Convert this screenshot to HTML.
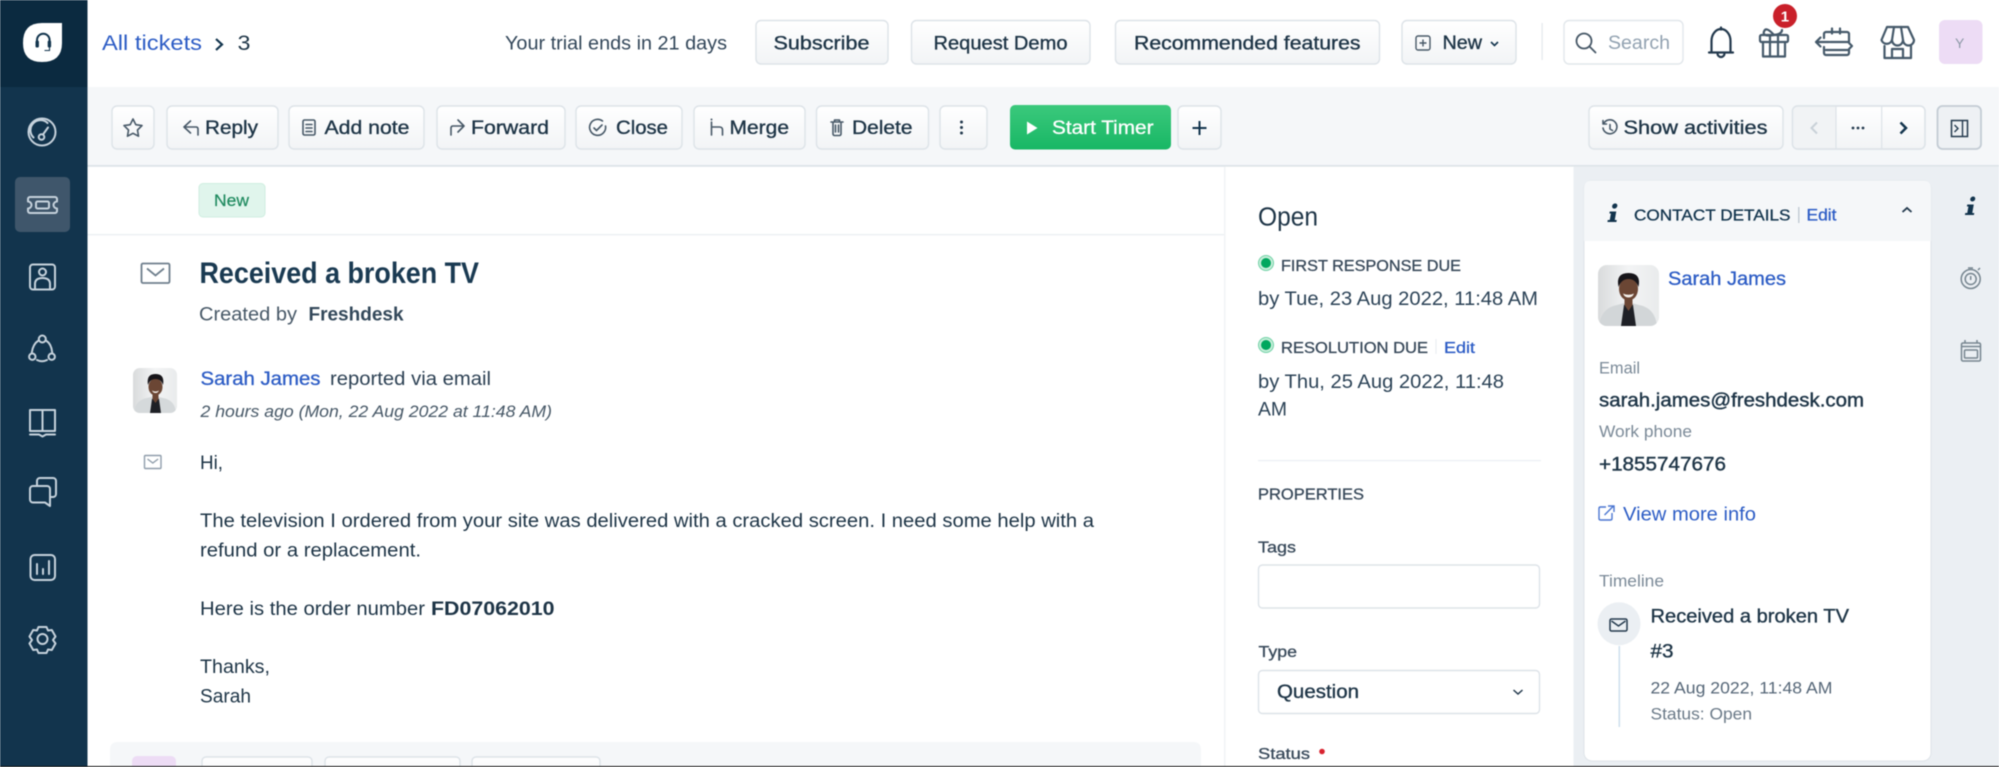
<!DOCTYPE html>
<html lang="en">
<head>
<meta charset="utf-8">
<title>Received a broken TV</title>
<style>
html,body{margin:0;padding:0;width:1999px;height:767px;overflow:hidden;background:#fff}
svg{display:block;filter:blur(.5px)}
text{font-family:"Liberation Sans",sans-serif;fill:#1d3446;font-size:19px}
.m{stroke:#1d3446;stroke-width:.35px}
.b{fill:#2c5cc5}
.bm{fill:#2c5cc5;stroke:#2c5cc5;stroke-width:.3px}
.g{fill:#475867}
.l{fill:#7b8a98;font-size:16.800px}
.u{font-size:16px;fill:#38495a;stroke:#38495a;stroke-width:.3px}
.ic{fill:none;stroke:#c6d2dc;stroke-width:2;stroke-linecap:round;stroke-linejoin:round}
.tb{fill:none;stroke:#475867;stroke-width:1.600;stroke-linecap:round;stroke-linejoin:round}
.hd{fill:none;stroke:#45596a;stroke-width:2.200;stroke-linecap:round;stroke-linejoin:round}
.btn{fill:url(#bg);stroke:#dde3e8;stroke-width:1.400}
</style>
</head>
<body>
<svg xmlns="http://www.w3.org/2000/svg" width="1999" height="767" viewBox="0 0 1999 767">
<defs>
<linearGradient id="bg" x1="0" y1="0" x2="0" y2="1"><stop offset="0" stop-color="#fff"/><stop offset="1" stop-color="#f2f4f6"/></linearGradient>
<linearGradient id="gr" x1="0" y1="0" x2="0" y2="1"><stop offset="0" stop-color="#3bc97c"/><stop offset="1" stop-color="#18b765"/></linearGradient>
<linearGradient id="ph" x1="0" y1="0" x2="1" y2="0"><stop offset="0" stop-color="#d9dbdc"/><stop offset=".5" stop-color="#f3f4f5"/><stop offset="1" stop-color="#e9ebec"/></linearGradient>
<clipPath id="c1"><rect x="133" y="368" width="44" height="45" rx="7"/></clipPath>
<clipPath id="c2"><rect x="1598" y="265" width="61" height="61" rx="9"/></clipPath>
</defs>

<rect width="1999" height="767" fill="#fff"/>

<!-- sidebar -->
<rect x="0" y="0" width="87.500" height="767" fill="#12344d"/>
<rect x="0" y="0" width="87.500" height="87" fill="#0b2a40"/>
<path d="M62 23V43Q62 62 42 62Q23 62 23 43Q23 23 42 23Z" fill="#fff"/>
<path d="M37 46V40a6.300 6.300 0 0 1 12.600 0V46" fill="none" stroke="#12344d" stroke-width="2"/>
<rect x="35.500" y="40.500" width="3.400" height="7" rx="1.400" fill="#12344d"/>
<rect x="47.700" y="40.500" width="3.400" height="7" rx="1.400" fill="#12344d"/>
<path d="M49.500 47.500v3h-5" fill="none" stroke="#12344d" stroke-width="1.100"/>

<!-- gauge -->
<g class="ic"><circle cx="42" cy="132" r="13.500"/><path d="M33.500 137.500a10 10 0 0 1 14-14.500"/><circle cx="41.500" cy="137" r="2.800"/><path d="M43 134.500l5-7"/></g>
<!-- ticket -->
<rect x="15" y="177" width="55" height="55" rx="5" fill="#3f566b"/>
<path class="ic" d="M30 197H55a2 2 0 0 1 2 2v2.500a3.500 3.500 0 0 0 0 7V211a2 2 0 0 1-2 2H30a2 2 0 0 1-2-2v-2.500a3.500 3.500 0 0 0 0-7V199a2 2 0 0 1 2-2Z"/>
<rect x="36" y="201.500" width="13" height="7" rx="1.500" class="ic"/>
<!-- contact -->
<g class="ic"><rect x="30" y="264.500" width="25" height="25" rx="3"/><circle cx="42.500" cy="272" r="3.500"/><path d="M35 289.500V284q0-6 7.500-6t7.500 6v5.500"/></g>
<!-- network -->
<g class="ic"><circle cx="42.300" cy="339" r="3.500"/><circle cx="32.300" cy="356.700" r="3.200"/><circle cx="51.700" cy="356.700" r="3.200"/><path d="M38.500 340.500Q33 344 31.800 352.500M46 340.500Q51.500 344 52.200 352.500M37 360q5 2.500 10 0"/></g>
<!-- book -->
<g class="ic"><path d="M42.500 412v19M30 410H42.500V431H30ZM42.500 410H55V431H42.500Z"/><path d="M30 434.500H39l3.500 2 3.500-2H55"/></g>
<!-- chat -->
<g class="ic"><path d="M37 485v-4a3 3 0 0 1 3-3h13a3 3 0 0 1 3 3v13a3 3 0 0 1-3 3h-2"/><path d="M33 486H47a3 3 0 0 1 3 3V506l-5-3.500H33a3 3 0 0 1-3-3V489a3 3 0 0 1 3-3Z"/></g>
<!-- report -->
<g class="ic"><rect x="30.500" y="555" width="24.500" height="25" rx="4"/><path d="M37 564v10M43 569v5M49 561v13"/></g>
<!-- gear -->
<g class="ic"><circle cx="42.500" cy="639" r="5"/><path d="M38.500 627h8l1.500 3.500 3.800-.5 3.700 6.500L53 640l2.500 3.500-3.700 6.500-3.800-.5L46.500 653h-8L37 649.500l-3.800.5-3.700-6.500L32 640l-2.500-3.500 3.700-6.500 3.800.5Z"/></g>

<!-- top bar -->
<text class="b" x="102" y="50" style="font-size:21.500px" textLength="100" lengthAdjust="spacingAndGlyphs">All tickets</text>
<path d="M216 39l6 5.500-6 5.500" fill="none" stroke="#12344d" stroke-width="2.200"/>
<text x="237.500" y="50" style="font-size:21.500px" textLength="13" lengthAdjust="spacingAndGlyphs">3</text>
<text style="fill:#33475a" x="505" y="49.500" textLength="222" lengthAdjust="spacingAndGlyphs">Your trial ends in 21 days</text>

<rect class="btn" x="756" y="20.500" width="132" height="43.500" rx="5"/>
<text class="m" x="773.500" y="49.500" textLength="96" lengthAdjust="spacingAndGlyphs">Subscribe</text>
<rect class="btn" x="911.500" y="20.500" width="178.500" height="43.500" rx="5"/>
<text class="m" x="933.500" y="49.500" textLength="134" lengthAdjust="spacingAndGlyphs">Request Demo</text>
<rect class="btn" x="1115.500" y="20.500" width="264" height="43.500" rx="5"/>
<text class="m" x="1134" y="49.500" textLength="226.500" lengthAdjust="spacingAndGlyphs">Recommended features</text>

<rect class="btn" x="1402" y="20.500" width="114" height="43.500" rx="5"/>
<rect x="1416" y="36" width="14" height="14" rx="2" fill="none" stroke="#475867" stroke-width="1.400"/>
<path d="M1423 39.500v7M1419.500 43h7" stroke="#475867" stroke-width="1.400"/>
<text class="m" x="1442.500" y="49" textLength="39.500" lengthAdjust="spacingAndGlyphs">New</text>
<path d="M1491 42l3.500 3.500 3.500-3.500" fill="none" stroke="#12344d" stroke-width="1.600"/>

<rect x="1541.500" y="23" width="1.200" height="37" fill="#e4e8ec"/>
<rect x="1564" y="20.500" width="119" height="43.500" rx="5" fill="#fff" stroke="#e2e7eb" stroke-width="1.400"/>
<circle cx="1584" cy="41" r="7.500" fill="none" stroke="#475867" stroke-width="1.800"/>
<path d="M1589.500 46.500l6 6" stroke="#475867" stroke-width="1.800" stroke-linecap="round"/>
<text x="1608" y="49" style="fill:#92a2b1" textLength="62" lengthAdjust="spacingAndGlyphs">Search</text>

<!-- bell -->
<g fill="none" stroke="#23394d" stroke-width="2.200" stroke-linecap="round" stroke-linejoin="round"><path d="M1709 52.500h24M1711.500 52V41a9.500 12 0 0 1 19 0V52"/><path d="M1721 27.500v2M1717.500 53.500a3.500 3.500 0 0 0 7 0"/></g>
<!-- gift -->
<g class="hd"><rect x="1760" y="35" width="28" height="7" rx="1.500"/><path d="M1763 42V56.500H1785V42M1770 42V56.500M1778 42V56.500M1770 35v7M1778 35v7"/><path d="M1774 35q-8-9-10-3.500t10 3.500q8-1 8-5"/></g>
<circle cx="1785" cy="16" r="12" fill="#c9202a"/>
<text x="1780.800" y="21.500" style="fill:#fff;font-size:15px;font-weight:bold">1</text>
<!-- calendar arrow -->
<g class="hd"><path d="M1824 38V34a2 2 0 0 1 2-2H1847a2 2 0 0 1 2 2V42M1824 47V53a2 2 0 0 0 2 2H1847a2 2 0 0 0 2-2V50M1830 42H1849M1826 50H1849M1832 28.500v5M1840 28.500v5"/><path d="M1816 42H1829M1820.500 37.500L1816 42l4.500 4.500"/><path d="M1849 43l3 3-3 3"/></g>
<!-- store -->
<g class="hd"><path d="M1881.500 40L1887 27H1908L1914 40a5.500 5.500 0 0 1-11 0a5.500 5.500 0 0 1-11 0a5.500 5.500 0 0 1-10.500 0Z"/><path d="M1892 40l2-13M1903 40l-2-13M1884.500 46V58H1911V46M1892 58V49H1903V58"/></g>
<rect x="1939" y="20" width="43.500" height="44" rx="6" fill="#eddcf5"/>
<text x="1955" y="48" style="font-size:14px;fill:#8f9aa8">Y</text>

<!-- toolbar -->
<rect x="87.500" y="87" width="1911.500" height="79" fill="#f5f7f9"/>
<rect x="87.500" y="165" width="1911.500" height="1.800" fill="#dde3e8"/>

<rect class="btn" x="112" y="106" width="42" height="43" rx="5"/>
<path class="tb" d="M133 119l2.800 5.700 6.200.9-4.500 4.400 1 6.200-5.500-2.900-5.500 2.900 1-6.200-4.500-4.400 6.200-.9Z"/>

<rect class="btn" x="167" y="106" width="111" height="43" rx="5"/>
<path class="tb" d="M190.500 121l-6.500 6 6.500 6M184 127h12q2 0 2 2v6"/>
<text class="m" x="205" y="134" textLength="53" lengthAdjust="spacingAndGlyphs">Reply</text>

<rect class="btn" x="289" y="106" width="135" height="43" rx="5"/>
<rect x="303" y="120" width="12" height="15" rx="1.500" class="tb"/><path class="tb" d="M306 124.500h6M306 128h6M306 131.500h6"/>
<text class="m" x="324.500" y="134" textLength="85" lengthAdjust="spacingAndGlyphs">Add note</text>

<rect class="btn" x="437" y="106" width="128" height="43" rx="5"/>
<path class="tb" d="M458 120l6 6-6 6M464 126h-11q-2 0-2 2v7"/>
<text class="m" x="471" y="134" textLength="78" lengthAdjust="spacingAndGlyphs">Forward</text>

<rect class="btn" x="576" y="106" width="106" height="43" rx="5"/>
<path class="tb" d="M605.500 126a8 8 0 1 1-3-5"/><path class="tb" d="M594 128l2.500 2.500 5.500-5.500"/>
<text class="m" x="616" y="134" textLength="52" lengthAdjust="spacingAndGlyphs">Close</text>

<rect class="btn" x="694" y="106" width="111" height="43" rx="5"/>
<path class="tb" d="M711.500 122v13M711.500 127h8q3 0 3 3v5"/><circle cx="711.500" cy="119.500" r="1" fill="#475867"/>
<text class="m" x="729.500" y="134" textLength="59.500" lengthAdjust="spacingAndGlyphs">Merge</text>

<rect class="btn" x="816.500" y="106" width="112" height="43" rx="5"/>
<path class="tb" d="M831 122h12M833 122v12a1.500 1.500 0 0 0 1.500 1.500h5a1.500 1.500 0 0 0 1.500-1.500v-12M834.500 122v-2h5v2M835.500 125v7M838.500 125v7"/>
<text class="m" x="852" y="134" textLength="60.500" lengthAdjust="spacingAndGlyphs">Delete</text>

<rect class="btn" x="940" y="106" width="47" height="43" rx="5"/>
<circle cx="961.500" cy="122" r="1.500" fill="#23394d"/><circle cx="961.500" cy="127.500" r="1.500" fill="#23394d"/><circle cx="961.500" cy="133" r="1.500" fill="#23394d"/>

<rect x="1010" y="105" width="161" height="44.500" rx="5" fill="url(#gr)"/>
<path d="M1027 121.500l10.500 6.500-10.500 6.500Z" fill="#fff"/>
<text x="1052" y="134" style="fill:#fff;stroke:#fff;stroke-width:.3px" textLength="101.500" lengthAdjust="spacingAndGlyphs">Start Timer</text>

<rect class="btn" x="1178" y="106" width="43" height="43" rx="5"/>
<path d="M1199.500 121v14M1192.500 128h14" stroke="#12344d" stroke-width="2"/>

<rect class="btn" x="1589" y="106" width="194" height="43" rx="5"/>
<path class="tb" d="M1604 123a7 7 0 1 1-1 5M1603 120.500v3.500h3.500M1610 124.500V129l2.500 1.500"/>
<text class="m" x="1623.500" y="134" textLength="144" lengthAdjust="spacingAndGlyphs">Show activities</text>

<rect x="1792.500" y="106" width="132.500" height="43" rx="5" fill="url(#bg)" stroke="#dde3e8" stroke-width="1.400"/>
<path d="M1793 106.700h43v41.600h-43Z" fill="#f1f3f5"/>
<rect x="1792.500" y="106" width="132.500" height="43" rx="5" fill="none" stroke="#dde3e8" stroke-width="1.400"/>
<path d="M1836 106v43M1881.700 106v43" stroke="#dde3e8" stroke-width="1.200"/>
<path d="M1817 122.500l-5.500 5.500 5.500 5.500" fill="none" stroke="#c9d1d8" stroke-width="2"/>
<circle cx="1853" cy="128" r="1.400" fill="#23394d"/><circle cx="1858" cy="128" r="1.400" fill="#23394d"/><circle cx="1863" cy="128" r="1.400" fill="#23394d"/>
<path d="M1900.500 122.500l5.500 5.500-5.500 5.500" fill="none" stroke="#12344d" stroke-width="2.500"/>

<rect x="1937.500" y="106" width="43.500" height="43" rx="5" fill="#eef1f4" stroke="#c3ccd4" stroke-width="1.800"/>
<rect x="1951.500" y="120.500" width="16" height="16" fill="none" stroke="#23394d" stroke-width="1.500"/>
<path d="M1962.500 120.500v16M1954.500 125l3.500 3.500-3.500 3.500" fill="none" stroke="#23394d" stroke-width="1.400"/>

<!-- main content -->
<rect x="199" y="183.500" width="66" height="33.500" rx="4" fill="#e0f5ec" stroke="#cfeee0" stroke-width="1"/>
<text x="214" y="206" style="fill:#1f8a5f;font-size:17px;stroke:#1f8a5f;stroke-width:.2px" textLength="35" lengthAdjust="spacingAndGlyphs">New</text>
<rect x="87.500" y="234" width="1137.500" height="1.300" fill="#ebeff3"/>

<rect x="141.500" y="263.500" width="28" height="19.500" rx="1.500" fill="none" stroke="#6f7f8d" stroke-width="1.800"/>
<path d="M147 268.500l8.500 7 8.500-7" fill="none" stroke="#6f7f8d" stroke-width="1.800"/>
<text x="199.500" y="283" style="font-size:30px;font-weight:bold;fill:#1a3a52" textLength="279.500" lengthAdjust="spacingAndGlyphs">Received a broken TV</text>
<text class="g" x="199" y="320.500" textLength="98" lengthAdjust="spacingAndGlyphs">Created by</text>
<text x="308.500" y="320.500" style="font-weight:bold;fill:#33485a" textLength="95" lengthAdjust="spacingAndGlyphs">Freshdesk</text>

<!-- small avatar -->
<g clip-path="url(#c1)">
<rect x="133" y="368" width="44" height="45" fill="url(#ph)"/>
<path d="M134 413q1-13 13-15l8-2 8 2q12 2 13 15Z" fill="#d5d9db"/>
<path d="M150 413l2-14 3.500-3 3.500 3 2 14Z" fill="#1e2026"/>
<path d="M152.500 399l3 4 3-4v-6h-6Z" fill="#6b4634"/>
<ellipse cx="155.500" cy="387" rx="7" ry="8.500" fill="#6b4634"/>
<path d="M148 385q-2-11 7.500-11t7.500 11q-2-6-7.500-6t-7.500 6Z" fill="#17151a"/>
<path d="M152 390.500q3.500 2 7 0q-1 2.500-3.500 2.500t-3.500-2.500Z" fill="#f4efe9"/>
</g>
<text class="bm" x="200.500" y="385" textLength="120" lengthAdjust="spacingAndGlyphs">Sarah James</text>
<text style="fill:#2d4154" x="330" y="385" textLength="161" lengthAdjust="spacingAndGlyphs">reported via email</text>
<text style="font-style:italic;font-size:17px;fill:#475867" x="200.500" y="417" textLength="351.500" lengthAdjust="spacingAndGlyphs">2 hours ago (Mon, 22 Aug 2022 at 11:48 AM)</text>

<rect x="144.500" y="455.500" width="16.500" height="13" rx="1" fill="none" stroke="#8f9dab" stroke-width="1.400"/>
<path d="M147.500 459l5.300 4 5.300-4" fill="none" stroke="#8f9dab" stroke-width="1.400"/>
<text x="200" y="469" textLength="23" lengthAdjust="spacingAndGlyphs">Hi,</text>
<text x="200" y="527" textLength="894" lengthAdjust="spacingAndGlyphs">The television I ordered from your site was delivered with a cracked screen. I need some help with a</text>
<text x="200" y="556.500" textLength="221" lengthAdjust="spacingAndGlyphs">refund or a replacement.</text>
<text x="200" y="615" textLength="225" lengthAdjust="spacingAndGlyphs">Here is the order number</text>
<text x="431" y="615" style="font-weight:bold" textLength="123.500" lengthAdjust="spacingAndGlyphs">FD07062010</text>
<text x="200" y="673" textLength="70" lengthAdjust="spacingAndGlyphs">Thanks,</text>
<text x="200" y="702.500" textLength="51" lengthAdjust="spacingAndGlyphs">Sarah</text>

<!-- reply bar -->
<path d="M110 767V750q0-8 8-8H1193q8 0 8 8V767Z" fill="#f5f7f9"/>
<path d="M132 767V762q0-6 6-6H170q6 0 6 6V767Z" fill="#eddcf5"/>
<rect x="202" y="757" width="110" height="20" rx="4" class="btn"/>
<rect x="325" y="757" width="135" height="20" rx="4" class="btn"/>
<rect x="472" y="757" width="128" height="20" rx="4" class="btn"/>

<!-- properties column -->
<rect x="1225" y="166.800" width="349" height="600" fill="#fff"/>
<rect x="1224" y="166.800" width="1.500" height="600" fill="#f1f3f5"/>
<text x="1258" y="225.500" style="font-size:25.500px" textLength="60" lengthAdjust="spacingAndGlyphs">Open</text>

<circle cx="1266" cy="263" r="7.500" fill="#c7eeda" stroke="#6fd1a5" stroke-width="1"/><circle cx="1266" cy="263" r="5" fill="#00a75e"/>
<text class="u" x="1281" y="271" textLength="180" lengthAdjust="spacingAndGlyphs">FIRST RESPONSE DUE</text>
<text style="fill:#2b4256" x="1258" y="305" textLength="280" lengthAdjust="spacingAndGlyphs">by Tue, 23 Aug 2022, 11:48 AM</text>

<circle cx="1266" cy="345" r="7.500" fill="#c7eeda" stroke="#6fd1a5" stroke-width="1"/><circle cx="1266" cy="345" r="5" fill="#00a75e"/>
<text class="u" x="1281" y="353" textLength="147" lengthAdjust="spacingAndGlyphs">RESOLUTION DUE</text>
<rect x="1435.500" y="339" width="1" height="15" fill="#e8ecef"/>
<text class="bm" x="1444" y="353" style="font-size:16px" textLength="31" lengthAdjust="spacingAndGlyphs">Edit</text>
<text style="fill:#2b4256" x="1258" y="388" textLength="246" lengthAdjust="spacingAndGlyphs">by Thu, 25 Aug 2022, 11:48</text>
<text style="fill:#2b4256" x="1258" y="415.500" textLength="29" lengthAdjust="spacingAndGlyphs">AM</text>

<rect x="1258" y="460" width="283" height="1.200" fill="#ebeff3"/>
<text class="u" x="1258" y="499.500" textLength="106" lengthAdjust="spacingAndGlyphs">PROPERTIES</text>
<text class="u" x="1258" y="552.500" textLength="38" lengthAdjust="spacingAndGlyphs">Tags</text>
<rect x="1258.500" y="565" width="281" height="43" rx="4" fill="#fff" stroke="#dde3e8" stroke-width="1.400"/>
<text class="u" x="1258.500" y="657" textLength="38.500" lengthAdjust="spacingAndGlyphs">Type</text>
<rect x="1258.500" y="670.500" width="281" height="43" rx="4" fill="#fff" stroke="#dde3e8" stroke-width="1.400"/>
<text class="m" x="1277" y="698" textLength="82" lengthAdjust="spacingAndGlyphs">Question</text>
<path d="M1513.500 690l4.500 4 4.500-4" fill="none" stroke="#23394d" stroke-width="1.500"/>
<text class="u" x="1258" y="759" textLength="52" lengthAdjust="spacingAndGlyphs">Status</text>
<circle cx="1322" cy="751.500" r="2.800" fill="#d8232f"/>

<!-- right column -->
<rect x="1573.500" y="166.800" width="425.500" height="600" fill="#ebeff3"/>
<rect x="1584" y="180.500" width="347" height="580.500" rx="8" fill="#fff" stroke="#dfe4e9" stroke-width="1"/>
<path d="M1584 241V188.500q0-8 8-8H1923q8 0 8 8V241Z" fill="#f5f7f9"/>
<g fill="#12344d" transform="translate(1613.500 213) skewX(-10) translate(-1613.500 -213)"><circle cx="1613.500" cy="206" r="2.600"/><path d="M1609.500 211.500h6.500V220h2v2h-9v-2h2v-6.500h-1.500Z"/></g>
<text class="u" style="fill:#12344d;stroke:#12344d" x="1634" y="220.500" textLength="156.500" lengthAdjust="spacingAndGlyphs">CONTACT DETAILS</text>
<rect x="1798.200" y="207" width="1.200" height="16" fill="#b9c4ce"/>
<text class="bm" x="1806.500" y="220.500" style="font-size:17px" textLength="30" lengthAdjust="spacingAndGlyphs">Edit</text>
<path d="M1902.500 212l4.500-4 4.500 4" fill="none" stroke="#23394d" stroke-width="1.800"/>

<g clip-path="url(#c2)">
<rect x="1598" y="265" width="61" height="61" fill="url(#ph)"/>
<path d="M1599 326q2-18 18-21l11-3 11 3q16 3 18 21Z" fill="#d2d6d8"/>
<path d="M1621 326l3-21 4.500-4 4.500 4 3 21Z" fill="#1e2026"/>
<path d="M1624.500 305l4 6 4-6v-8h-8Z" fill="#6b4634"/>
<ellipse cx="1628.500" cy="289" rx="9.500" ry="11.500" fill="#6b4634"/>
<path d="M1618.500 287q-3-14 10-14t10 14q-3-8-10-8t-10 8Z" fill="#17151a"/>
<path d="M1623 293.500q5.500 2.500 11 0q-1.500 4-5.500 4t-5.500-4Z" fill="#f4efe9"/>
</g>
<text class="bm" x="1668" y="285" textLength="118" lengthAdjust="spacingAndGlyphs">Sarah James</text>

<text class="l" x="1599" y="373.500" textLength="41" lengthAdjust="spacingAndGlyphs">Email</text>
<text class="m" style="stroke-width:.4px" x="1599" y="406.500" textLength="265" lengthAdjust="spacingAndGlyphs">sarah.james@freshdesk.com</text>
<text class="l" x="1599" y="437" textLength="93" lengthAdjust="spacingAndGlyphs">Work phone</text>
<text class="m" style="stroke-width:.4px" x="1599" y="470.500" textLength="127" lengthAdjust="spacingAndGlyphs">+1855747676</text>

<path d="M1606 507h-5.500q-1.500 0-1.500 1.500v10q0 1.500 1.500 1.500h10q1.500 0 1.500-1.500V513M1604.500 515l9-9M1608 506h6v6" fill="none" stroke="#4a75d1" stroke-width="1.400"/>
<text class="b" x="1623" y="520.500" textLength="133" lengthAdjust="spacingAndGlyphs">View more info</text>

<text class="l" x="1599" y="586.500" textLength="65" lengthAdjust="spacingAndGlyphs">Timeline</text>
<rect x="1618.500" y="646" width="1.600" height="81" fill="#cfe0ee"/>
<circle cx="1619" cy="623.800" r="21.500" fill="#ebeff3"/>
<rect x="1610" y="619" width="17" height="12" rx="1.500" fill="none" stroke="#23394d" stroke-width="1.500"/>
<path d="M1611.500 621l7 5 7-5" fill="none" stroke="#23394d" stroke-width="1.500"/>
<text class="m" x="1650.500" y="622.500" textLength="198.500" lengthAdjust="spacingAndGlyphs">Received a broken TV</text>
<text class="m" x="1650.500" y="657.500" textLength="23" lengthAdjust="spacingAndGlyphs">#3</text>
<text style="font-size:16.800px;fill:#566778" x="1650.500" y="693.500" textLength="182" lengthAdjust="spacingAndGlyphs">22 Aug 2022, 11:48 AM</text>
<text style="font-size:16.800px;fill:#6b7a88" x="1650.500" y="719.500" textLength="101.500" lengthAdjust="spacingAndGlyphs">Status: Open</text>

<!-- right rail -->
<g fill="#12344d" transform="translate(1971 206) skewX(-10) translate(-1971 -206)"><circle cx="1971.500" cy="199" r="2.500"/><path d="M1967 204.500h6.500V213h2v2h-9v-2h2v-6.500H1967Z"/></g>
<g fill="none" stroke="#76858f" stroke-width="1.500"><circle cx="1970.700" cy="279" r="9.500"/><circle cx="1970.700" cy="279" r="5.500"/><path d="M1970.700 276v4M1968 268h5M1978 270l2-2"/></g>
<g fill="none" stroke="#76858f" stroke-width="1.500"><rect x="1961.500" y="343" width="19" height="18" rx="1.500"/><rect x="1964.500" y="350" width="13" height="8" rx="1"/><path d="M1965 340v3M1977 340v3M1961.500 346.500h19"/></g>

<!-- bottom edge -->
<rect x="0" y="766" width="1999" height="1" fill="#0d0d0d"/>
</svg>
</body>
</html>
